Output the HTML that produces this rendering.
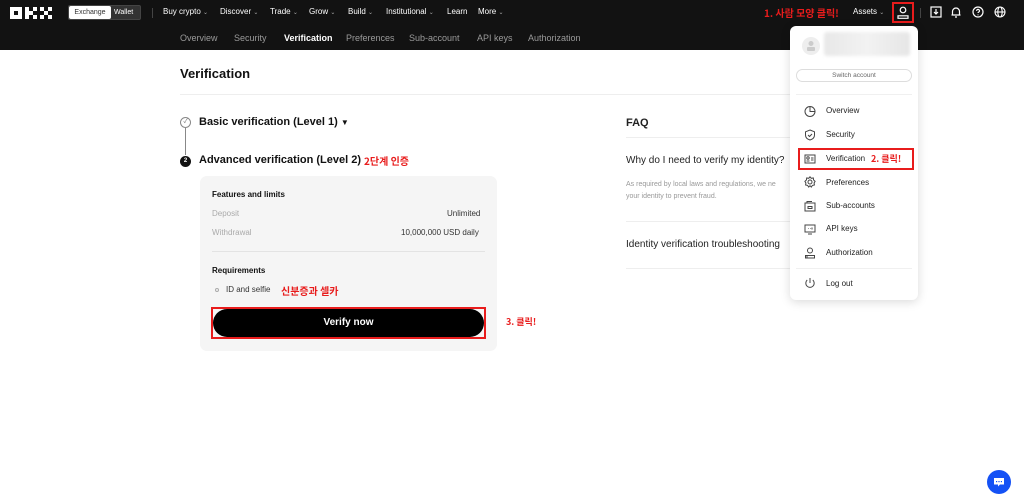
<!DOCTYPE html>
<html><head><meta charset="utf-8"><style>
*{margin:0;padding:0;box-sizing:border-box}
body{width:1024px;height:497px;overflow:hidden;background:#fff;font-family:"Liberation Sans","Noto Sans CJK KR",sans-serif;position:relative;color:#111}
.a{position:absolute;white-space:nowrap}
.top{position:absolute;left:0;top:0;width:1024px;height:50px;background:#121212}
.nav{color:#fff;font-size:8px;top:7px}
.sub{color:#9a9a9a;font-size:9px;top:33px}
.red{color:#e81c1c;font-weight:bold;font-family:"Noto Sans CJK KR","Liberation Sans",sans-serif}
.chev{font-size:6px;color:#aaa}
.menu{position:absolute;left:790px;top:26px;width:128px;height:274px;background:#fff;border-radius:6px;box-shadow:0 2px 10px rgba(0,0,0,.15)}
.mi{position:absolute;left:36px;font-size:8px;color:#222}
.ic{position:absolute;left:14px;width:12px;height:12px}
</style></head><body>
<div class="top"></div>
<!-- logo -->
<svg class="a" style="left:10px;top:7px" width="44" height="12" viewBox="0 0 44 12">
<rect x="0" y="0" width="12" height="12" fill="#fff"/><rect x="4" y="4" width="4" height="4" fill="#121212"/>
<g fill="#fff"><rect x="15" y="0" width="4" height="12"/><rect x="19" y="4" width="4" height="4"/><rect x="23" y="0" width="4" height="4"/><rect x="23" y="8" width="4" height="4"/>
<rect x="30" y="0" width="4" height="4"/><rect x="38" y="0" width="4" height="4"/><rect x="34" y="4" width="4" height="4"/><rect x="30" y="8" width="4" height="4"/><rect x="38" y="8" width="4" height="4"/></g></svg>
<div class="a" style="left:68px;top:5px;width:73px;height:15px;border:1px solid #444;border-radius:2px;background:#333"></div>
<div class="a" style="left:69px;top:6px;width:42px;height:13px;background:#fff;border-radius:2px;font-size:7px;color:#333;text-align:center;line-height:13px">Exchange</div>
<div class="a" style="left:114px;top:9px;font-size:7px;color:#fff">Wallet</div>
<div class="a" style="left:152px;top:8px;width:1px;height:10px;background:#444"></div>
<div class="a nav" style="left:163px">Buy crypto <span class="chev">⌄</span></div>
<div class="a nav" style="left:220px">Discover <span class="chev">⌄</span></div>
<div class="a nav" style="left:270px">Trade <span class="chev">⌄</span></div>
<div class="a nav" style="left:309px">Grow <span class="chev">⌄</span></div>
<div class="a nav" style="left:348px">Build <span class="chev">⌄</span></div>
<div class="a nav" style="left:386px">Institutional <span class="chev">⌄</span></div>
<div class="a nav" style="left:447px">Learn</div>
<div class="a nav" style="left:478px">More <span class="chev">⌄</span></div>
<div class="a sub" style="left:180px">Overview</div>
<div class="a sub" style="left:234px">Security</div>
<div class="a sub" style="left:284px;color:#fff;font-weight:bold">Verification</div>
<div class="a sub" style="left:346px">Preferences</div>
<div class="a sub" style="left:409px">Sub-account</div>
<div class="a sub" style="left:477px">API keys</div>
<div class="a sub" style="left:528px">Authorization</div>
<!-- top right -->
<div class="a red" style="left:764px;top:5px;font-size:10px">1. 사람 모양 클릭!</div>
<div class="a nav" style="left:853px">Assets <span class="chev">⌄</span></div>
<div class="a" style="left:892px;top:2px;width:22px;height:21px;border:2px solid #e81c1c"></div>
<svg class="a" style="left:897px;top:6px" width="12" height="13" viewBox="0 0 12 13" fill="none" stroke="#fff" stroke-width="1.2"><circle cx="6" cy="4" r="2.8"/><path d="M1 12.3v-2.5h10v2.5z"/></svg>
<div class="a" style="left:920px;top:8px;width:1px;height:10px;background:#444"></div>
<svg class="a" style="left:930px;top:6px" width="12" height="12" viewBox="0 0 12 12" fill="none" stroke="#fff" stroke-width="1.2"><rect x="1" y="1" width="10" height="10"/><path d="M6 3v5M4 6l2 2 2-2"/></svg>
<svg class="a" style="left:950px;top:6px" width="12" height="12" viewBox="0 0 12 12" fill="none" stroke="#fff" stroke-width="1.2"><path d="M2.5 9V5.5a3.5 3.5 0 017 0V9zM1.5 9h9M5 11h2"/></svg>
<svg class="a" style="left:972px;top:6px" width="12" height="12" viewBox="0 0 12 12" fill="none" stroke="#fff" stroke-width="1.2"><circle cx="6" cy="6" r="5"/><path d="M4.5 4.8a1.5 1.5 0 113 .2c0 1-1.5 1-1.5 2M6 8.5v.8"/></svg>
<svg class="a" style="left:994px;top:6px" width="12" height="12" viewBox="0 0 12 12" fill="none" stroke="#fff" stroke-width="1.1"><circle cx="6" cy="6" r="5"/><ellipse cx="6" cy="6" rx="2.2" ry="5"/><path d="M1 6h10"/></svg>
<!-- main -->
<div class="a" style="left:180px;top:66px;font-size:13px;font-weight:bold">Verification</div>
<div class="a" style="left:180px;top:94px;width:620px;height:1px;background:#eee"></div>
<div class="a" style="left:180px;top:117px;width:11px;height:11px;border:1px solid #888;border-radius:50%;font-size:6px;color:#666;text-align:center;line-height:9px">✓</div>
<div class="a" style="left:185px;top:128px;width:1px;height:27px;background:#888"></div>
<div class="a" style="left:180px;top:156px;width:11px;height:11px;background:#111;border-radius:50%;font-size:6px;color:#fff;text-align:center;line-height:11px;font-weight:bold">2</div>
<div class="a" style="left:199px;top:116px;font-size:11px;font-weight:bold">Basic verification (Level 1) <span style="font-size:8px">▼</span></div>
<div class="a" style="left:199px;top:154px;font-size:11px;font-weight:bold">Advanced verification (Level 2)</div>
<div class="a red" style="left:364px;top:153px;font-size:10px">2단계 인증</div>
<div class="a" style="left:200px;top:176px;width:297px;height:175px;background:#f5f5f5;border-radius:7px"></div>
<div class="a" style="left:212px;top:190px;font-size:8px;font-weight:bold">Features and limits</div>
<div class="a" style="left:212px;top:209px;font-size:8px;color:#aaa">Deposit</div>
<div class="a" style="left:447px;top:209px;font-size:8px;color:#333">Unlimited</div>
<div class="a" style="left:212px;top:228px;font-size:8px;color:#aaa">Withdrawal</div>
<div class="a" style="left:401px;top:228px;font-size:8px;color:#333">10,000,000 USD daily</div>
<div class="a" style="left:212px;top:251px;width:273px;height:1px;background:#e3e3e3"></div>
<div class="a" style="left:212px;top:266px;font-size:8px;font-weight:bold">Requirements</div>
<div class="a" style="left:215px;top:288px;width:4px;height:4px;border:1px solid #aaa;border-radius:50%"></div>
<div class="a" style="left:226px;top:285px;font-size:8px;color:#333">ID and selfie</div>
<div class="a red" style="left:281px;top:283px;font-size:10px">신분증과 셀카</div>
<div class="a" style="left:211px;top:307px;width:275px;height:32px;border:2px solid #e81c1c"></div>
<div class="a" style="left:213px;top:309px;width:271px;height:28px;background:#000;border-radius:14px;color:#fff;font-size:10px;font-weight:bold;text-align:center;line-height:28px">Verify now</div>
<div class="a red" style="left:506px;top:315px;font-size:9px">3. 클릭!</div>
<!-- FAQ -->
<div class="a" style="left:626px;top:117px;font-size:11px;font-weight:bold;color:#222">FAQ</div>
<div class="a" style="left:626px;top:137px;width:170px;height:1px;background:#eee"></div>
<div class="a" style="left:626px;top:155px;font-size:10px;color:#222">Why do I need to verify my identity?</div>
<div class="a" style="left:626px;top:179px;font-size:7px;color:#999;line-height:12px">As required by local laws and regulations, we ne<br>your identity to prevent fraud.</div>
<div class="a" style="left:626px;top:221px;width:170px;height:1px;background:#eee"></div>
<div class="a" style="left:626px;top:239px;font-size:10px;color:#222">Identity verification troubleshooting</div>
<div class="a" style="left:626px;top:268px;width:170px;height:1px;background:#eee"></div>
<!-- dropdown -->
<div class="menu">
<div class="a" style="left:12px;top:11px;width:18px;height:18px;border-radius:50%;background:#eee"></div>
<svg class="a" style="left:16px;top:14px" width="10" height="11" viewBox="0 0 10 11" fill="#ccc"><circle cx="5" cy="3.5" r="2.5"/><rect x="1" y="7" width="8" height="4" rx="1"/></svg>
<div class="a" style="left:34px;top:6px;width:86px;height:24px;background:linear-gradient(90deg,#e8e8e8,#f2f2f2,#e6e6e6);border-radius:3px;filter:blur(1.5px)"></div>
<div class="a" style="left:6px;top:43px;width:116px;height:13px;border:1px solid #ddd;border-radius:7px;font-size:6.5px;color:#666;text-align:center;line-height:11px">Switch account</div>
<div class="a" style="left:6px;top:68px;width:116px;height:1px;background:#f0f0f0"></div>
<svg class="ic" style="top:79px" viewBox="0 0 12 12" fill="none" stroke="#444" stroke-width="1"><circle cx="6" cy="6.5" r="5"/><path d="M6 1.5v5h5"/></svg>
<div class="mi" style="top:80px">Overview</div>
<svg class="ic" style="top:103px" viewBox="0 0 12 12" fill="none" stroke="#444" stroke-width="1"><path d="M6 1l4.5 1.8v3.2c0 2.8-2 4.3-4.5 5-2.5-.7-4.5-2.2-4.5-5V2.8z"/><path d="M4 6l1.5 1.5L8 5"/></svg>
<div class="mi" style="top:104px">Security</div>
<div class="a" style="left:8px;top:122px;width:116px;height:22px;border:2px solid #e81c1c"></div>
<svg class="ic" style="top:127px" viewBox="0 0 12 12" fill="none" stroke="#444" stroke-width="1"><rect x="1" y="2" width="10" height="8"/><circle cx="4" cy="5" r="1.2"/><path d="M2.5 8h3M7 5h2.5M7 7h2.5"/></svg>
<div class="mi" style="top:128px">Verification</div>
<div class="a red" style="left:81px;top:126px;font-size:9px">2. 클릭!</div>
<svg class="ic" style="top:150px" viewBox="0 0 12 12" fill="none" stroke="#444" stroke-width="1"><circle cx="6" cy="6" r="2"/><path d="M6 .8l1.3 1.5 2-.3.3 2 1.5 1.3-1 1.7.3 2-2 .4-1.1 1.7-1.3-1.4-1.3 1.4-1.1-1.7-2-.4.3-2-1-1.7 1.5-1.3.3-2 2 .3z"/></svg>
<div class="mi" style="top:152px">Preferences</div>
<svg class="ic" style="top:174px" viewBox="0 0 12 12" fill="none" stroke="#444" stroke-width="1"><rect x="1" y="3" width="10" height="8"/><path d="M3 3V1.5h5"/><rect x="4" y="6.5" width="4" height="2"/></svg>
<div class="mi" style="top:175px">Sub-accounts</div>
<svg class="ic" style="top:197px" viewBox="0 0 12 12" fill="none" stroke="#444" stroke-width="1"><rect x="1" y="2" width="10" height="7"/><path d="M4 11h4M4 5.5h.5M6 5.5h.5M8 4.5v2"/></svg>
<div class="mi" style="top:198px">API keys</div>
<svg class="ic" style="top:221px" viewBox="0 0 12 12" fill="none" stroke="#444" stroke-width="1"><circle cx="6" cy="3.5" r="2.5"/><path d="M1.5 11V8.5h9V11zM3 11v-2.5"/></svg>
<div class="mi" style="top:222px">Authorization</div>
<div class="a" style="left:6px;top:242px;width:116px;height:1px;background:#f0f0f0"></div>
<svg class="ic" style="top:251px" viewBox="0 0 12 12" fill="none" stroke="#444" stroke-width="1"><path d="M6 1v5M3.2 3a4.2 4.2 0 105.6 0"/></svg>
<div class="mi" style="top:253px">Log out</div>
</div>
<!-- chat -->
<div class="a" style="left:987px;top:470px;width:24px;height:24px;border-radius:50%;background:#1451f5"></div>
<svg class="a" style="left:993px;top:476px" width="12" height="12" viewBox="0 0 12 12"><path d="M1 2h10v6.5H7L5 10.5V8.5H1z" fill="#fff"/><g fill="#1451f5"><rect x="3" y="5" width="1.2" height="1.2"/><rect x="5.4" y="5" width="1.2" height="1.2"/><rect x="7.8" y="5" width="1.2" height="1.2"/></g></svg>
</body></html>
